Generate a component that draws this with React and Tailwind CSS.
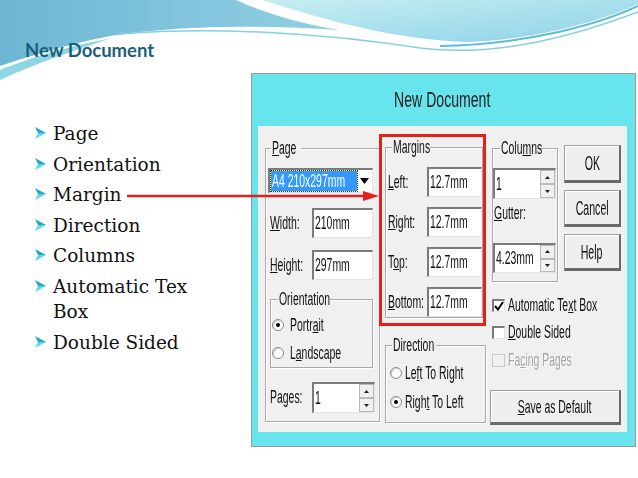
import React from 'react';

// Slide: "New Document" with bullets on the left and a dialog picture on the right.

const sunken =
  'bg-white border-t-2 border-l-2 border-b border-r border-t-[#7b7b7b] border-l-[#7b7b7b] border-b-[#e3e3e3] border-r-[#e3e3e3]';
const raised =
  'bg-[#efefef] border border-[#a0a0a0] border-b-[3px] border-r-2 border-b-[#6a6a6a] border-r-[#6a6a6a] shadow-[inset_1px_1px_0_#fff]';

function T({ children, className = '', s = 'scale-x-[0.58]', o = 'origin-left' }) {
  return (
    <span className={`inline-block whitespace-nowrap leading-none ${o} ${s} ${className}`}>
      {children}
    </span>
  );
}

function Group({ label, lw, lx = 'ml-[6px]', className = '', children }) {
  return (
    <div
      className={`relative border border-[#a9a9a9] shadow-[inset_1px_1px_0_#fff,1px_1px_0_#fff] ${className}`}
    >
      <div className={`-mt-[10px] flex h-[18px] items-center bg-[#f0f0f0] px-[1px] ${lw} ${lx}`}>
        <T>{label}</T>
      </div>
      {children}
    </div>
  );
}

function Spin() {
  return (
    <div className="flex h-full w-[15px] shrink-0 flex-col">
      <div className="flex flex-1 items-center justify-center border border-[#b8b8b8] bg-[#f0f0f0]">
        <svg width="5" height="3" viewBox="0 0 5 3">
          <path d="M2.5 0L5 3H0Z" fill="#222" />
        </svg>
      </div>
      <div className="flex flex-1 items-center justify-center border border-[#b8b8b8] bg-[#f0f0f0]">
        <svg width="5" height="3" viewBox="0 0 5 3">
          <path d="M0 0H5L2.5 3Z" fill="#222" />
        </svg>
      </div>
    </div>
  );
}

function Input({ value, spin, className = '' }) {
  return (
    <div className={`${sunken} flex items-center pl-[1px] ${className}`}>
      <div className="min-w-0 flex-1">
        <T>{value}</T>
      </div>
      {spin && <Spin />}
    </div>
  );
}

function Radio({ on }) {
  return (
    <div className="flex h-[12px] w-[12px] shrink-0 items-center justify-center rounded-full border border-[#8a8a8a] bg-white shadow-[inset_1px_1px_0_#cfcfcf]">
      {on && <div className="h-[4px] w-[4px] rounded-full bg-black" />}
    </div>
  );
}

function Check({ on, off }) {
  return (
    <div
      className={`flex h-[13px] w-[13px] shrink-0 items-center justify-center ${
        off
          ? 'border border-[#c8c8c8] bg-[#f0f0f0]'
          : 'border-t-2 border-l-2 border-b border-r border-t-[#7b7b7b] border-l-[#7b7b7b] border-b-[#e3e3e3] border-r-[#e3e3e3] bg-white'
      }`}
    >
      {on && (
        <svg width="10" height="10" viewBox="0 0 10 10">
          <path d="M1 5L4 8.5L9 1" fill="none" stroke="#000" strokeWidth="2" />
        </svg>
      )}
    </div>
  );
}

function Button({ label, className = '' }) {
  return (
    <div className={`${raised} flex items-center justify-center ${className}`}>
      <T s="scale-x-[0.53]" o="origin-center" className="text-[20px]">
        {label}
      </T>
    </div>
  );
}

function Row({ label, value, spin, lw = 'w-[42px]', iw, h = 'h-[30px]', className = '' }) {
  return (
    <div className={`flex items-center ${h} ${className}`}>
      <div className={`${lw} shrink-0`}>
        <T>{label}</T>
      </div>
      <Input value={value} spin={spin} className={`h-full ${iw}`} />
    </div>
  );
}

function Dialog() {
  return (
    <div className="flex h-[374px] w-[385px] shrink-0 flex-col border border-[#9a9a9a] bg-[#68e5ec] pl-[6px] pr-[8px] pb-[14px] font-['Liberation_Sans',Arial,sans-serif] text-[18px] text-[#111]">
      <div className="flex h-[52px] items-center justify-center">
        <T s="scale-x-[0.64]" o="origin-center" className="text-[22px] text-[#222]">
          New Document
        </T>
      </div>

      <div className="flex h-[306px] items-start bg-[#f0f0f0]">
        {/* Page */}
        <Group label={<><u>P</u>age</>} lw="w-[30px]" lx="ml-[5px]" className="ml-[7px] mt-[22px] h-[274px] w-[115px] shrink-0">
          <div className={`${sunken} ml-[2px] mt-[11px] flex h-[25px] w-[105px] items-stretch p-[1px]`}>
            <div className="flex w-[86px] items-center bg-[#3399ff] pl-[1px] text-white outline-1 outline-dotted outline-[#333]">
              <T>A4 210x297mm</T>
            </div>
            <div className="ml-auto flex w-[15px] items-center justify-center">
              <svg width="9" height="6" viewBox="0 0 9 6">
                <path d="M0 0H9L4.5 6Z" fill="#000" />
              </svg>
            </div>
          </div>
          <Row label={<><u>W</u>idth:</>} value="210mm" iw="w-[61px]" className="mt-[15px] pl-[4px]" />
          <Row label={<><u>H</u>eight:</>} value="297mm" iw="w-[61px]" className="mt-[12px] pl-[4px]" />
          <Group label="Orientation" lw="w-[52px]" lx="ml-[7px]" className="ml-[4px] mt-[19px] h-[69px] w-[103px]">
            <div className="mt-[7px] flex h-[20px] items-center gap-[6px] pl-[1px]">
              <Radio on />
              <T>Portr<u>a</u>it</T>
            </div>
            <div className="mt-[8px] flex h-[20px] items-center gap-[6px] pl-[1px]">
              <Radio />
              <T>L<u>a</u>ndscape</T>
            </div>
          </Group>
          <Row label={<>Pa<u>g</u>es:</>} value="1" spin iw="w-[63px]" h="h-[31px]" className="mt-[14px] pl-[4px]" />
        </Group>

        {/* Margins + Direction */}
        <div className="ml-[5px] mt-[21px] flex w-[101px] shrink-0 flex-col">
          <Group label="Margins" lw="w-[38px]" className="w-[98px]">
            <div className="absolute -bottom-[9px] -left-[7px] -right-[4px] -top-[14px] border-[3px] border-[#e3201c]" />
            <div className="mt-[11px] flex flex-col gap-[10px] pl-[2px]">
              <Row label={<><u>L</u>eft:</>} value="12.7mm" lw="w-[39px]" iw="w-[55px]" />
              <Row label={<><u>R</u>ight:</>} value="12.7mm" lw="w-[39px]" iw="w-[55px]" />
              <Row label={<>T<u>o</u>p:</>} value="12.7mm" lw="w-[39px]" iw="w-[55px]" />
              <Row label={<><u>B</u>ottom:</>} value="12.7mm" lw="w-[39px]" iw="w-[55px]" />
            </div>
          </Group>
          <Group label="Direction" lw="w-[44px]" className="mt-[27px] h-[78px] w-[101px]">
            <div className="mt-[9px] flex h-[20px] items-center gap-[3px] pl-[4px]">
              <Radio />
              <T>Le<u>f</u>t To Right</T>
            </div>
            <div className="mt-[9px] flex h-[20px] items-center gap-[3px] pl-[4px]">
              <Radio on />
              <T>Righ<u>t</u> To Left</T>
            </div>
          </Group>
        </div>

        {/* Columns, buttons, options */}
        <div className="ml-[4px] mt-[19px] flex w-[132px] shrink-0 flex-col">
          <div className="flex items-start">
            <Group label={<>Colu<u>m</u>ns</>} lw="w-[40px]" lx="ml-[7px]" className="ml-[2px] mt-[3px] h-[134px] w-[66px] shrink-0">
              <Input value="1" spin className="mt-[11px] h-[31px] w-[63px]" />
              <div className="mt-[5px] flex h-[18px] items-center pl-[1px]">
                <T><u>G</u>utter:</T>
              </div>
              <Input value="4.23mm" spin className="mt-[21px] h-[30px] w-[63px]" />
            </Group>
            <div className="ml-[6px] flex w-[57px] shrink-0 flex-col gap-[7px]">
              <Button label="OK" className="h-[38px]" />
              <Button label="Cancel" className="h-[37px]" />
              <Button label="Help" className="h-[37px]" />
            </div>
          </div>
          <div className="mt-[13px] flex h-[20px] items-center gap-[3px] pl-[2px]">
            <Check on />
            <T>Automatic Te<u>x</u>t Box</T>
          </div>
          <div className="mt-[7px] flex h-[20px] items-center gap-[3px] pl-[2px]">
            <Check />
            <T><u>D</u>ouble Sided</T>
          </div>
          <div className="mt-[8px] flex h-[20px] items-center gap-[3px] pl-[2px]">
            <Check off />
            <T className="text-[#a3a3a3] [text-shadow:1px_1px_0_#fff]">Fa<u>c</u>ing Pages</T>
          </div>
          <div className={`${raised} mt-[20px] flex h-[35px] w-[131px] items-center justify-center`}>
            <T o="origin-center"><u>S</u>ave as Default</T>
          </div>
        </div>
      </div>
    </div>
  );
}

function Bullet() {
  return (
    <svg className="mt-[6px] shrink-0" width="11" height="12" viewBox="0 0 11 12">
      <path d="M0 0L11 6H3Z" fill="#1fa9c2" />
      <path d="M0 12L11 6H3Z" fill="#5cd6e4" />
    </svg>
  );
}

function Wave() {
  return (
    <svg className="absolute left-0 top-0" width="638" height="90" viewBox="0 0 638 90">
      <defs>
        <linearGradient id="wa" x1="0" y1="0" x2="1" y2="0">
          <stop offset="0" stopColor="#6db6d4" />
          <stop offset="1" stopColor="#92d0e3" />
        </linearGradient>
        <linearGradient id="wb" x1="0" y1="0" x2="1" y2="1">
          <stop offset="0" stopColor="#c6eef2" />
          <stop offset="1" stopColor="#8dd2e7" />
        </linearGradient>
      </defs>
      <path d="M0 0H236C262 12 300 24 340 30C260 24 170 26 110 36C60 46 25 58 0 66Z" fill="url(#wa)" />
      <path d="M0 70C25 60 60 48 112 38C62 54 26 68 0 80Z" fill="#8fd6e4" />
      <path d="M262 0H638V4C600 22 530 40 468 42C400 40 330 22 262 0Z" fill="url(#wb)" />
      <path d="M120 34C220 26 330 34 420 48C500 58 580 34 638 12" fill="none" stroke="#86cfe2" strokeWidth="1.5" />
      <path d="M440 46C530 44 600 24 638 6" fill="none" stroke="#5bbcd7" strokeWidth="2" />
    </svg>
  );
}

const items = ['Page', 'Orientation', 'Margin', 'Direction', 'Columns', 'Automatic Tex Box', 'Double Sided'];

export default function App() {
  return (
    <div className="relative h-[478px] w-[638px] overflow-hidden bg-white">
      <Wave />
      <div className="relative h-[73px] pl-[25px] pt-[38px]">
        <h1 className="font-['Lato',sans-serif] text-[18.5px] font-bold leading-[24px] text-[#1a5f7a]">
          New Document
        </h1>
      </div>
      <div className="relative flex">
        <ul className="flex w-[251px] shrink-0 flex-col gap-[5px] pl-[35px] pt-[48px] font-['DejaVu_Serif',serif] text-[18.5px] leading-[25.5px] text-[#111]">
          {items.map(t => (
            <li key={t} className="flex items-start gap-[7px]">
              <Bullet />
              <span className="w-[150px]">{t}</span>
            </li>
          ))}
        </ul>
        <Dialog />
      </div>
      <svg className="absolute left-[127px] top-[191px]" width="252" height="10" viewBox="0 0 252 10">
        <path d="M0 5H238" stroke="#e3201c" strokeWidth="2.5" />
        <path d="M236 0L252 5L236 10Z" fill="#e3201c" />
      </svg>
    </div>
  );
}
